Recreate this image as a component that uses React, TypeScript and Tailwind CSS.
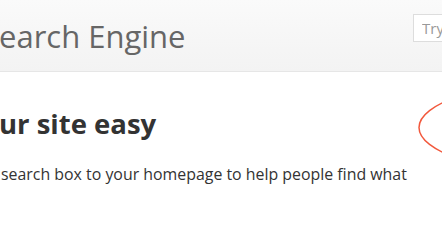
export default function App() {
  return (
    <div
      className="relative w-[442px] h-[232px] overflow-hidden bg-white"
      style={{ fontFamily: '"Open Sans", "Liberation Sans", sans-serif' }}
    >
      {/* Header bar */}
      <header className="flex h-[72px] items-start border-b border-[#e6e6e6] bg-gradient-to-b from-[#fafafa] to-[#f3f3f3]">
        <h1 className="ml-[-1px] mt-[18px] flex-1 whitespace-nowrap text-[31px] leading-[36px] font-normal text-[#666]">
          earch Engine
        </h1>
        <input
          type="text"
          placeholder="Try searching..."
          className="mr-[-171px] mt-[14px] h-[28px] w-[200px] shrink-0 border border-[#dddddd] bg-white px-[8px] text-[15px] text-[#555] placeholder:text-[#999] outline-none"
        />
      </header>

      {/* Content */}
      <main className="pt-[35px]">
        <h2 className="ml-[-1px] whitespace-nowrap text-[27.5px] leading-[34px] font-bold text-[#333]">
          ur site easy
        </h2>
        <p className="ml-[1px] mt-[21px] whitespace-nowrap text-[15.9px] leading-[24px] text-[#333]">
          search box to your homepage to help people find what
        </p>
      </main>

      {/* Hand-drawn highlight circle */}
      <svg
        className="absolute left-[418px] top-[70px]"
        width="320"
        height="120"
        viewBox="0 0 320 120"
        fill="none"
      >
        <ellipse cx="151" cy="57.5" rx="150" ry="46" stroke="#f2583c" strokeWidth="1.5" />
      </svg>
    </div>
  );
}
